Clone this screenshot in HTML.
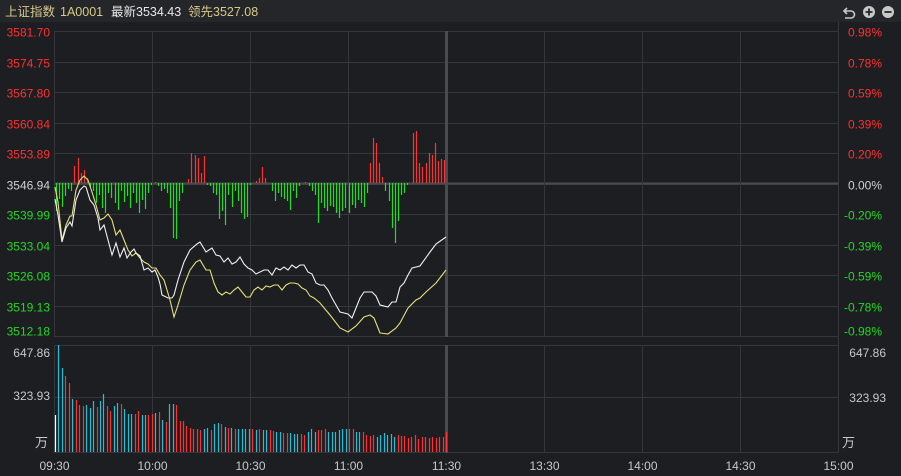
<!DOCTYPE html>
<html><head><meta charset="utf-8"><style>
html,body{margin:0;padding:0;background:#1d1e22;width:901px;height:476px;overflow:hidden;font-family:"Liberation Sans","Noto Sans CJK SC",sans-serif;}
svg{position:absolute;left:0;top:0}
</style></head><body>
<svg id="s" width="901" height="476" xmlns="http://www.w3.org/2000/svg" font-family="Liberation Sans, Noto Sans CJK SC, sans-serif" font-size="12">
<rect x="0" y="0" width="901" height="22" fill="#252629"/>
<text x="5" y="16" fill="#d6c98a" font-size="12.5">上证指数</text>
<text x="60" y="16" fill="#d6c98a" font-size="12.5">1A0001</text>
<text x="111" y="16" fill="#e8e8e8" font-size="12.5">最新3534.43</text>
<text x="188" y="16" fill="#d6c98a" font-size="12.5">领先3527.08</text>
<g fill="none" stroke="#c8c8c8" stroke-width="1.6"><path d="M847 8 L844 11 L847 14 M844 11 H851 A3.5 3.5 0 0 1 851 18 H845"/></g>
<circle cx="869" cy="12" r="6" fill="#c8c8c8"/><path d="M865.5 12H872.5M869 8.5V15.5" stroke="#252629" stroke-width="1.8"/>
<circle cx="888" cy="12" r="6" fill="#c8c8c8"/><path d="M884.5 12H891.5" stroke="#252629" stroke-width="1.8"/>
<g id="grid" stroke="#35363b" stroke-width="1"></g>
<g id="bars"></g>
<g id="vol"></g>
<g id="labels" font-size="12"></g>
</svg>
<script>
var NS="http://www.w3.org/2000/svg";
function el(p,t,a,txt){var e=document.createElementNS(NS,t);for(var k in a)e.setAttribute(k,a[k]);if(txt!=null)e.textContent=txt;p.appendChild(e);return e;}
var g=document.getElementById('grid'),L=document.getElementById('labels'),B=document.getElementById('bars'),V=document.getElementById('vol');
var left=['3581.70','3574.75','3567.80','3560.84','3553.89','3546.94','3539.99','3533.04','3526.08','3519.13','3512.18'];
var right=['0.98%','0.78%','0.59%','0.39%','0.20%','0.00%','-0.20%','-0.39%','-0.59%','-0.78%','-0.98%'];
for(var i=0;i<11;i++){var y=Math.round(31+i*30.5)+0.5;
 el(g,'line',{x1:54,x2:838,y1:y,y2:y});
 var c=i<5?'#ff3030':(i==5?'#d0d0d0':'#22d822');
 var ty=i==0?y+5:(i==10?y-1:y+5);
 el(L,'text',{x:50,y:ty,'text-anchor':'end',fill:c},left[i]);
 el(L,'text',{x:882,y:ty,'text-anchor':'end',fill:c},right[i]);}
// middle line brighter
el(g,'line',{x1:54,x2:838,y1:183.5,y2:183.5,stroke:'#4a4b50','stroke-width':2});
[345.5,397.5,452.5].forEach(function(y){el(g,'line',{x1:54,x2:838,y1:y,y2:y});});
var times=['09:30','10:00','10:30','11:00','11:30','13:30','14:00','14:30','15:00'];
for(var i=0;i<9;i++){var x=54.5+i*98;
 el(g,'line',{x1:x,x2:x,y1:31,y2:337});el(g,'line',{x1:x,x2:x,y1:345,y2:453});
 el(L,'text',{x:x,y:470,'text-anchor':'middle',fill:'#c8c8c8'},times[i]);}
el(g,'line',{x1:446.5,x2:446.5,y1:31,y2:337,stroke:'#4a4b50','stroke-width':3});
el(g,'line',{x1:446.5,x2:446.5,y1:345,y2:453,stroke:'#4a4b50','stroke-width':3});
el(g,'line',{x1:838.5,x2:838.5,y1:22,y2:453});
el(L,'text',{x:50,y:357,'text-anchor':'end',fill:'#c8c8c8'},'647.86');
el(L,'text',{x:50,y:400,'text-anchor':'end',fill:'#c8c8c8'},'323.93');
el(L,'text',{x:48,y:447,'text-anchor':'end',fill:'#c8c8c8','font-size':13},'万');
el(L,'text',{x:886,y:357,'text-anchor':'end',fill:'#c8c8c8'},'647.86');
el(L,'text',{x:886,y:402,'text-anchor':'end',fill:'#c8c8c8'},'323.93');
el(L,'text',{x:855,y:447,'text-anchor':'end',fill:'#c8c8c8','font-size':13},'万');
// price bars
var h=[-28,-16,-24,-13,-6,-8,17,25,10,13,5,-4,-8,-20,-12,-25,-30,-10,-15,-20,-27,-8,-19,-13,-25,-10,-20,-30,-17,-26,-10,-2,1,-3,-8,-6,-10,-25,-55,-56,-18,-10,0,4,30,28,25,10,27,-2,-3,-10,-12,-36,-28,-42,-12,-24,-8,-18,-30,-36,-34,-2,0,2,5,16,5,0,-8,-18,-10,-14,-16,-18,-27,-8,-15,-3,0,1,-3,-8,-12,-40,-20,-25,-28,-23,-24,-30,-35,-28,-25,-30,-22,-25,-17,-20,-24,-10,20,45,40,20,6,-8,-18,-45,-60,-38,-12,-10,-2,0,50,52,20,16,20,30,28,40,22,24,23];
var step=(444-56)/(h.length-1);
h.forEach(function(v,i){if(!v)return;var x=56+i*step;x=Math.round(x)+0.5;
 el(B,'line',{x1:x,x2:x,y1:183,y2:183-v,stroke:v>0?'#ff3030':'#1ee01e','stroke-width':1.2});});
var W=[55,199,58,215,62,242,66,228,70,222,72,226,76,200,80,190,84,186,86,187,90,200,94,205,98,218,100,230,104,225,108,240,112,255,116,243,120,257,124,248,127,258,131,252,134,249,136,253,140,256,144,270,148,268,152,272,155,270,158,277,160,284,162,295,168,298,172,298,174,295,178,280,184,262,190,250,197,244,200,242,206,252,212,248,216,255,220,256,224,262,228,258,232,264,236,262,240,257,244,264,248,268,252,270,256,274,260,272,264,270,268,270,272,275,276,268,280,270,284,267,288,270,292,265,296,268,300,265,304,265,308,272,312,274,316,283,320,285,324,285,328,290,332,298,340,312,348,314,352,318,360,298,364,292,372,292,376,296,380,305,388,307,392,302,396,302,400,287,404,283,408,275,412,268,420,266,430,252,436,244,446,237];
var Y=[55,187,58,202,62,240,66,225,70,216,72,216,76,190,80,180,84,176,88,180,92,192,96,205,100,220,104,218,108,214,112,220,116,235,120,230,124,240,128,250,132,256,136,253,140,258,144,262,148,264,152,268,156,268,160,275,164,280,170,300,174,317,178,305,184,285,190,270,196,262,200,260,206,270,210,270,214,283,218,292,222,295,226,292,230,294,234,290,238,287,242,292,246,297,250,297,254,290,258,287,262,290,266,286,270,287,274,285,278,285,282,290,286,285,290,283,294,283,298,284,302,288,306,290,310,296,314,298,320,303,330,315,340,328,348,332,356,326,364,317,370,315,374,318,380,333,388,334,396,328,400,323,408,308,416,300,420,298,426,292,436,283,446,270];
el(B,'polyline',{points:Y.join(' '),fill:'none',stroke:'#e6e07a','stroke-width':1.1});
el(B,'polyline',{points:W.join(' '),fill:'none',stroke:'#f0f0f0','stroke-width':1.1});
// volume
var v="37w,107c,84c,76r,69r,53c,52r,47r,46r,47c,44c,51c,45r,51c,58c,46r,41r,46c,49c,48r,43c,38c,38c,38r,41r,37c,37c,37r,38r,39c,40r,32c,30r,48c,48c,47r,31r,31r,26r,24r,23r,23r,22r,23c,24c,22r,28c,29c,28r,25c,24r,24c,23r,23c,23c,23c,23c,23r,22c,23r,22c,22c,22r,21r,20c,20c,19r,19r,19c,18c,18c,18r,17r,20c,23c,20c,22r,22r,23r,20c,20c,20c,22c,23c,23c,23r,23r,20c,20c,20r,17r,16r,17r,15c,17c,19c,17c,18c,15c,17r,16r,16r,14r,15r,17r,13r,15r,15r,14r,15r,14r,15r,15r,20r".split(',');
var vs=(446-55)/(v.length-1);
v.forEach(function(s,i){var hh=parseInt(s),t=s.slice(-1);var x=Math.round(55+i*vs)+0.5;
 el(V,'line',{x1:x,x2:x,y1:452,y2:452-hh,stroke:t=='w'?'#ffffff':(t=='c'?'#20c0d8':'#ff3030'),'stroke-width':1.2});});
</script>
</body></html>
